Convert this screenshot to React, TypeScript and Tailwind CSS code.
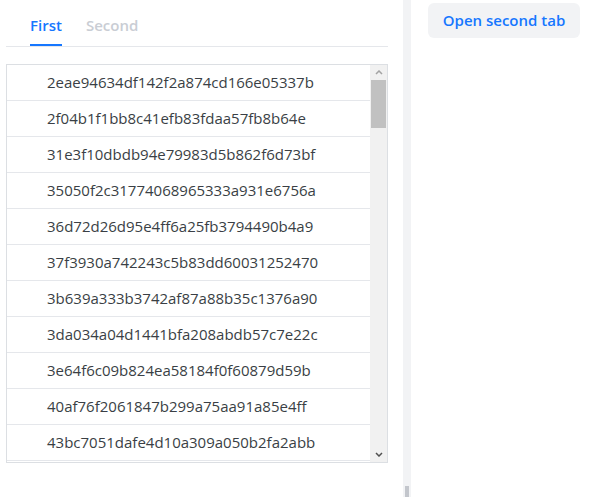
import React from 'react'

const ids = [
  '2eae94634df142f2a874cd166e05337b',
  '2f04b1f1bb8c41efb83fdaa57fb8b64e',
  '31e3f10dbdb94e79983d5b862f6d73bf',
  '35050f2c31774068965333a931e6756a',
  '36d72d26d95e4ff6a25fb3794490b4a9',
  '37f3930a742243c5b83dd60031252470',
  '3b639a333b3742af87a88b35c1376a90',
  '3da034a04d1441bfa208abdb57c7e22c',
  '3e64f6c09b824ea58184f0f60879d59b',
  '40af76f2061847b299a75aa91a85e4ff',
  '43bc7051dafe4d10a309a050b2fa2abb',
]

function ScrollBar() {
  return (
    <div className="flex w-[17px] shrink-0 flex-col bg-[#f1f1f1]">
      <div className="flex h-[15px] items-center justify-center">
        <svg width="8" height="5" viewBox="0 0 8 5">
          <path d="M1 4 L4 1 L7 4" fill="none" stroke="#a3a3a3" strokeWidth="1.5" />
        </svg>
      </div>
      <div className="mx-[1px] h-[48px] bg-[#c1c1c1]" />
      <div className="flex-1" />
      <div className="flex h-[15px] items-center justify-center">
        <svg width="8" height="5" viewBox="0 0 8 5">
          <path d="M1 1 L4 4 L7 1" fill="none" stroke="#505050" strokeWidth="1.5" />
        </svg>
      </div>
    </div>
  )
}

export default function App() {
  return (
    <div className="flex h-[497px] w-[596px] overflow-hidden bg-white font-['Open_Sans',sans-serif]">
      <div className="w-[403px] shrink-0 pl-[6px] pr-[15px]">
        <div className="flex h-[47px] gap-6 border-b border-[#e5e7eb] pl-6">
          <div className="flex flex-col justify-end">
            <span className="text-[15px] font-semibold text-[#1677ff]">First</span>
            <div className="mt-[8px] h-[2px] bg-[#1677ff]" />
          </div>
          <div className="flex flex-col justify-end">
            <span className="text-[15px] font-semibold text-[#c9cdd4]">Second</span>
            <div className="mt-[8px] h-[2px]" />
          </div>
        </div>
        <div className="mt-[17px] flex h-[399px] overflow-hidden border border-[#dcdfe3]">
          <div className="flex-1 overflow-hidden">
            {ids.map((id) => (
              <div
                key={id}
                className="flex h-[36px] items-center border-b border-[#e5e7eb] pl-[40px] text-[15px] text-[#3a3f45]"
              >
                {id}
              </div>
            ))}
          </div>
          <ScrollBar />
        </div>
      </div>
      <div className="relative w-[8px] shrink-0 bg-[#f2f3f5]">
        <div className="absolute bottom-0 left-[2px] h-[11px] w-[4px] bg-[#c3c6cc]" />
      </div>
      <div className="pl-[17px] pt-[3px]">
        <button className="h-[35px] w-[152px] rounded-md bg-[#f2f3f5] text-[15px] font-semibold text-[#1677ff]">
          Open second tab
        </button>
      </div>
    </div>
  )
}
